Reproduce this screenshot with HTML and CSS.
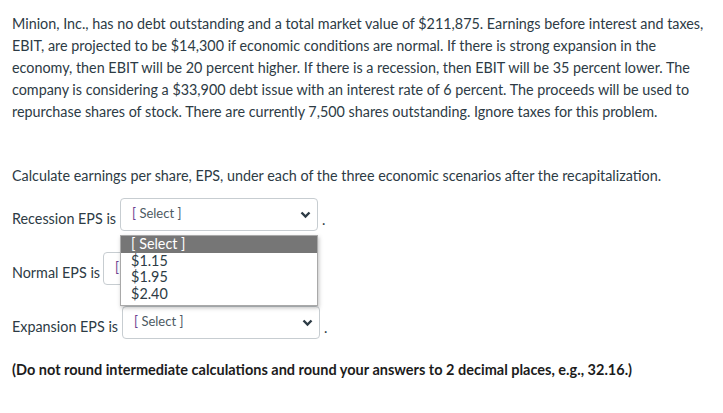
FILE: index.html
```html
<!DOCTYPE html>
<html>
<head>
<meta charset="utf-8">
<link rel="stylesheet" href="styles.css">
</head>
<body>
<div class="page">
  <p class="intro">Minion, Inc., has no debt outstanding and a total market value of $211,875. Earnings before interest and taxes, EBIT, are projected to be $14,300 if economic conditions are normal. If there is strong expansion in the economy, then EBIT will be 20 percent higher. If there is a recession, then EBIT will be 35 percent lower. The company is considering a $33,900 debt issue with an interest rate of 6 percent. The proceeds will be used to repurchase shares of stock. There are currently 7,500 shares outstanding. Ignore taxes for this problem.</p>
  <p class="question">Calculate earnings per share, EPS, under each of the three economic scenarios after the recapitalization.</p>
  <div class="rows">
    <div class="row">
      <span class="label">Recession EPS is</span>
      <div class="select-wrap">
        <div class="select sel-recession">
          <span class="placeholder"><span class="br">[</span> Select ]</span>
          <svg class="chev" width="11" height="8" viewBox="0 0 11 8"><path d="M1.5 1.5 L5.5 5.5 L9.5 1.5" fill="none" stroke="#2d3b45" stroke-width="2.4"/></svg>
        </div>
        <ul class="listbox">
          <li class="opt active">[ Select ]</li>
          <li class="opt">$1.15</li>
          <li class="opt">$1.95</li>
          <li class="opt">$2.40</li>
        </ul>
      </div>
      <span class="dot">.</span>
    </div>
    <div class="row">
      <span class="label">Normal EPS is</span>
      <div class="select sel-normal">
        <span class="placeholder"><span class="br">[</span> Select ]</span>
        <svg class="chev" width="11" height="8" viewBox="0 0 11 8"><path d="M1.5 1.5 L5.5 5.5 L9.5 1.5" fill="none" stroke="#2d3b45" stroke-width="2.4"/></svg>
      </div>
      <span class="dot">.</span>
    </div>
    <div class="row">
      <span class="label">Expansion EPS is</span>
      <div class="select sel-expansion">
        <span class="placeholder"><span class="br">[</span> Select ]</span>
        <svg class="chev" width="11" height="8" viewBox="0 0 11 8"><path d="M1.5 1.5 L5.5 5.5 L9.5 1.5" fill="none" stroke="#2d3b45" stroke-width="2.4"/></svg>
      </div>
      <span class="dot">.</span>
    </div>
  </div>
  <p class="note">(Do not round intermediate calculations and round your answers to 2 decimal places, e.g., 32.16.)</p>
</div>
</body>
</html>
```
FILE: styles.css
```css
html, body {
  margin: 0;
  padding: 0;
  background: #ffffff;
}
.page {
  padding: 13px 8px 0 12px;
  font-family: Lato, "Liberation Sans", sans-serif;
  font-size: 14.35px;
  line-height: 22px;
  color: #2d3b45;
}
.intro {
  margin: 0;
}
.question {
  margin: 42px 0 0 0;
}
.rows {
  margin-top: 11px;
  display: flex;
  flex-direction: column;
  gap: 21px;
}
.row {
  display: flex;
  align-items: center;
  height: 33px;
}
.label {
  margin-top: 8px;
}
.select-wrap {
  position: relative;
  margin-left: 4px;
}
.select {
  box-sizing: border-box;
  width: 198px;
  height: 33px;
  border: 1px solid #c7cdd1;
  border-radius: 4px;
  background: #fff;
  display: flex;
  align-items: center;
  justify-content: space-between;
  padding: 0 6px 0 11px;
}
.sel-normal {
  margin-left: 3px;
}
.sel-expansion {
  margin-left: 4px;
}
.placeholder {
  color: #4d5a63;
  font-size: 13px;
  margin-top: -4px;
}
.br {
  color: #6b3d8f;
}
.chev {
  margin-top: 1px;
}
.dot {
  margin-left: 4px;
  margin-top: 10px;
}
.listbox {
  position: absolute;
  left: 0;
  top: 37px;
  width: 198px;
  box-sizing: border-box;
  margin: 0;
  padding: 0 0 2px 0;
  list-style: none;
  background: #fff;
  border: 1px solid #a9a9a9;
  box-shadow: 1px 2px 4px rgba(0,0,0,0.25);
  z-index: 5;
}
.opt {
  height: 16.7px;
  line-height: 16px;
  padding-left: 10px;
  font-size: 14.35px;
  color: #2d3b45;
}
.opt.active {
  background: #767676;
  color: #ffffff;
}
.note {
  margin: 20px 0 0 0;
  font-family: Lato, sans-serif;
  font-weight: bold;
  font-size: 14.5px;
  color: #1c1c1c;
}
```
